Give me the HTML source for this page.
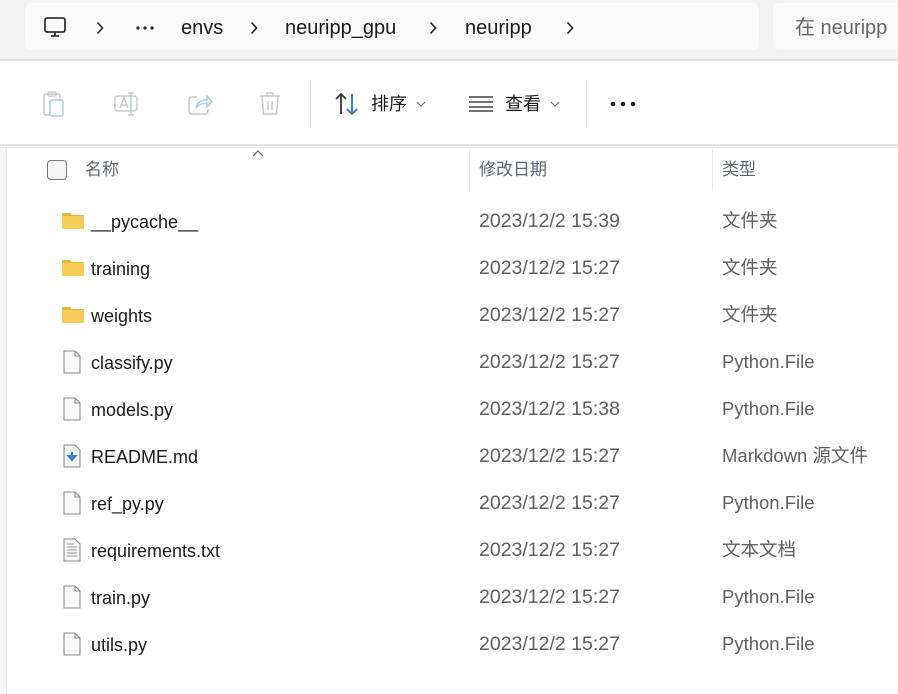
<!DOCTYPE html>
<html><head><meta charset="utf-8"><style>
*{margin:0;padding:0;box-sizing:border-box}
body{width:898px;height:694px;overflow:hidden;background:#fff;font-family:"Liberation Sans","Noto Sans CJK SC",sans-serif;position:relative}
.abs{position:absolute;line-height:24px;white-space:nowrap}
.top{left:0;top:0;width:898px;height:61px;background:#f3f3f3;border-bottom:2px solid #e1e1e1}
.addr{left:25px;top:3px;width:734px;height:47px;background:#fafafa;border-radius:6px}
.search{left:773px;top:3px;width:140px;height:47px;background:#fafafa;border-radius:6px}
.bc{font-size:20px;color:#1a1a1a;top:16px}
.tb{left:0;top:63px;width:898px;height:81px;background:#fff}
.sep{width:1px;background:#e5e5e5;top:80px;height:48px}
.hl{left:0;width:898px;height:2px;background:#e3e3e3}
.hdr{font-size:17px;color:#5d6470;top:158px}
.row{font-size:18px;color:#1a1a1a}
.d{font-size:19.5px;color:#5f5f5f;left:479px}
.t{font-size:18.5px;color:#5f5f5f;left:722px}
.colsep{width:1px;background:#e8e8e8;top:149px;height:42px}
</style></head><body>
<div class="abs top"></div>
<div class="abs addr"></div>
<div class="abs search"></div>
<svg class="abs" style="left:43px;top:16px" width="24" height="24" viewBox="0 0 24 24"><rect x="2" y="2" width="20" height="14" rx="2" fill="none" stroke="#333" stroke-width="1.8"/><path d="M8 20h8M12 16v4" stroke="#333" stroke-width="1.8"/></svg>
<svg class="abs" style="left:96px;top:21px" width="8" height="14" viewBox="0 0 8 14"><path d="M1.5 1.5l5 5.5-5 5.5" fill="none" stroke="#222" stroke-width="1.6"/></svg>
<svg class="abs" style="left:136px;top:26px" width="18" height="4"><circle cx="2" cy="2" r="1.6" fill="#222"/><circle cx="9" cy="2" r="1.6" fill="#222"/><circle cx="16" cy="2" r="1.6" fill="#222"/></svg>
<div class="abs bc" style="left:181px">envs</div>
<svg class="abs" style="left:250px;top:21px" width="8" height="14" viewBox="0 0 8 14"><path d="M1.5 1.5l5 5.5-5 5.5" fill="none" stroke="#222" stroke-width="1.6"/></svg>
<div class="abs bc" style="left:285px">neuripp_gpu</div>
<svg class="abs" style="left:429px;top:21px" width="8" height="14" viewBox="0 0 8 14"><path d="M1.5 1.5l5 5.5-5 5.5" fill="none" stroke="#222" stroke-width="1.6"/></svg>
<div class="abs bc" style="left:465px">neuripp</div>
<svg class="abs" style="left:566px;top:21px" width="8" height="14" viewBox="0 0 8 14"><path d="M1.5 1.5l5 5.5-5 5.5" fill="none" stroke="#222" stroke-width="1.6"/></svg>
<div class="abs bc" style="left:795px;color:#666">在 neuripp</div>

<div class="abs tb"></div>
<svg class="abs" style="left:42px;top:91px" width="26" height="28" viewBox="0 0 26 28"><rect x="2" y="3" width="16" height="21" rx="2" fill="none" stroke="#c8c8c8" stroke-width="1.5"/><rect x="8" y="9" width="13" height="16" rx="2" fill="#fff" stroke="#a9cdea" stroke-width="1.5"/><rect x="6" y="1" width="8" height="4" rx="1" fill="none" stroke="#c8c8c8" stroke-width="1.3"/></svg>
<svg class="abs" style="left:113px;top:91px" width="26" height="26" viewBox="0 0 26 26"><rect x="2" y="5" width="22" height="15" rx="3" fill="none" stroke="#c8c8c8" stroke-width="1.5"/><path d="M7 17l4-10 4 10M8.5 14h5M18 2v22M15 2h6M15 24h6" fill="none" stroke="#a9cdea" stroke-width="1.5"/></svg>
<svg class="abs" style="left:187px;top:91px" width="26" height="26" viewBox="0 0 26 26"><path d="M10 6H5a3 3 0 0 0-3 3v11a3 3 0 0 0 3 3h13a3 3 0 0 0 3-3v-2" fill="none" stroke="#c8c8c8" stroke-width="1.5"/><path d="M9 17c1-5 5-8 11-8V5l5 5.5-5 5.5v-4c-4 0-8 1-11 5z" fill="none" stroke="#a9cdea" stroke-width="1.5"/></svg>
<svg class="abs" style="left:258px;top:91px" width="24" height="26" viewBox="0 0 24 26"><path d="M2 5h20M9 5V2h6v3M4 5l1.5 18h13L20 5M10 10v9M14 10v9" fill="none" stroke="#c8c8c8" stroke-width="1.5"/></svg>
<div class="abs sep" style="left:310px"></div>
<svg class="abs" style="left:334px;top:92px" width="26" height="24" viewBox="0 0 26 24"><path d="M7 22V2M2 7l5-5 5 5" fill="none" stroke="#333" stroke-width="1.8"/><path d="M18 2v20M13 17l5 5 5-5" fill="none" stroke="#1e7ac8" stroke-width="1.8"/></svg>
<div class="abs" style="left:371px;top:92px;font-size:18px;color:#1a1a1a">排序</div>
<svg class="abs" style="left:416px;top:101px" width="10" height="6"><path d="M1 1l4 4 4-4" fill="none" stroke="#777" stroke-width="1.2"/></svg>
<svg class="abs" style="left:469px;top:96px" width="24" height="16" viewBox="0 0 24 16"><path d="M0 1h24M0 6h24M0 11h24M0 15h24" stroke="#444" stroke-width="1.5"/></svg>
<div class="abs" style="left:505px;top:92px;font-size:18px;color:#1a1a1a">查看</div>
<svg class="abs" style="left:550px;top:101px" width="10" height="6"><path d="M1 1l4 4 4-4" fill="none" stroke="#777" stroke-width="1.2"/></svg>
<div class="abs sep" style="left:586px"></div>
<svg class="abs" style="left:610px;top:100px" width="26" height="8" viewBox="0 0 26 8"><circle cx="3" cy="4" r="2.3" fill="#222"/><circle cx="13" cy="4" r="2.3" fill="#222"/><circle cx="23" cy="4" r="2.3" fill="#222"/></svg>

<div class="abs hl" style="top:144px"></div>
<div class="abs hl" style="top:147px;height:1px;background:#eee"></div>
<div class="abs" style="left:0;top:148px;width:7px;height:546px;background:#f5f5f5;border-right:1px solid #e6e6e6"></div>
<svg class="abs" style="left:252px;top:150px" width="12" height="7"><path d="M1 6l5-5 5 5" fill="none" stroke="#666" stroke-width="1.2"/></svg>
<div class="abs" style="left:47px;top:160px;width:20px;height:20px;border:1.5px solid #777;border-radius:4px;background:#f5f5f5"></div>
<div class="abs hdr" style="left:85px">名称</div>
<div class="abs colsep" style="left:469px"></div>
<div class="abs hdr" style="left:479px">修改日期</div>
<div class="abs colsep" style="left:712px"></div>
<div class="abs hdr" style="left:722px">类型</div>

<svg width="0" height="0" style="position:absolute"><defs>
<symbol id="fold" viewBox="0 0 22 18"><path d="M0 2a1 1 0 0 1 1-1h7l2 2h11a1 1 0 0 1 1 1v1H0z" fill="#e8b33a"/><rect x="0" y="4" width="22" height="13" rx="1" fill="#f7cd5a"/></symbol>
<symbol id="file" viewBox="0 0 18 24"><path d="M1 1h11l5 5v17H1z" fill="#fafafa" stroke="#8a8a8a" stroke-width="1.1"/><path d="M12 1v5h5" fill="none" stroke="#8a8a8a" stroke-width="1.1"/></symbol>
</defs></svg>

<svg class="abs" style="left:62px;top:212px" width="22" height="18"><use href="#fold"/></svg>
<div class="abs row" style="left:91px;top:210px">__pycache__</div>
<div class="abs d" style="top:209px">2023/12/2 15:39</div><div class="abs t" style="top:209px">文件夹</div>

<svg class="abs" style="left:62px;top:259px" width="22" height="18"><use href="#fold"/></svg>
<div class="abs row" style="left:91px;top:257px">training</div>
<div class="abs d" style="top:256px">2023/12/2 15:27</div><div class="abs t" style="top:256px">文件夹</div>

<svg class="abs" style="left:62px;top:306px" width="22" height="18"><use href="#fold"/></svg>
<div class="abs row" style="left:91px;top:304px">weights</div>
<div class="abs d" style="top:303px">2023/12/2 15:27</div><div class="abs t" style="top:303px">文件夹</div>

<svg class="abs" style="left:63px;top:350px" width="18" height="24"><use href="#file"/></svg>
<div class="abs row" style="left:91px;top:351px">classify.py</div>
<div class="abs d" style="top:350px">2023/12/2 15:27</div><div class="abs t" style="top:350px">Python.File</div>

<svg class="abs" style="left:63px;top:397px" width="18" height="24"><use href="#file"/></svg>
<div class="abs row" style="left:91px;top:398px">models.py</div>
<div class="abs d" style="top:397px">2023/12/2 15:38</div><div class="abs t" style="top:397px">Python.File</div>

<svg class="abs" style="left:63px;top:444px" width="18" height="24" viewBox="0 0 18 24"><path d="M1 1h11l5 5v17H1z" fill="#f0f4f8" stroke="#8a8a8a" stroke-width="1.1"/><path d="M9 8v6M5.5 12l3.5 4 3.5-4z" fill="#3a7fc0" stroke="#3a7fc0" stroke-width="2"/></svg>
<div class="abs row" style="left:91px;top:445px">README.md</div>
<div class="abs d" style="top:444px">2023/12/2 15:27</div><div class="abs t" style="top:444px">Markdown 源文件</div>

<svg class="abs" style="left:63px;top:491px" width="18" height="24"><use href="#file"/></svg>
<div class="abs row" style="left:91px;top:492px">ref_py.py</div>
<div class="abs d" style="top:491px">2023/12/2 15:27</div><div class="abs t" style="top:491px">Python.File</div>

<svg class="abs" style="left:63px;top:538px" width="18" height="24" viewBox="0 0 18 24"><path d="M1 1h11l5 5v17H1z" fill="#f5f5f5" stroke="#8a8a8a" stroke-width="1.1"/><path d="M4 6h7M4 9h10M4 12h10M4 15h10M4 18h10" stroke="#999" stroke-width="1"/></svg>
<div class="abs row" style="left:91px;top:539px">requirements.txt</div>
<div class="abs d" style="top:538px">2023/12/2 15:27</div><div class="abs t" style="top:538px">文本文档</div>

<svg class="abs" style="left:63px;top:585px" width="18" height="24"><use href="#file"/></svg>
<div class="abs row" style="left:91px;top:586px">train.py</div>
<div class="abs d" style="top:585px">2023/12/2 15:27</div><div class="abs t" style="top:585px">Python.File</div>

<svg class="abs" style="left:63px;top:632px" width="18" height="24"><use href="#file"/></svg>
<div class="abs row" style="left:91px;top:633px">utils.py</div>
<div class="abs d" style="top:632px">2023/12/2 15:27</div><div class="abs t" style="top:632px">Python.File</div>
</body></html>
